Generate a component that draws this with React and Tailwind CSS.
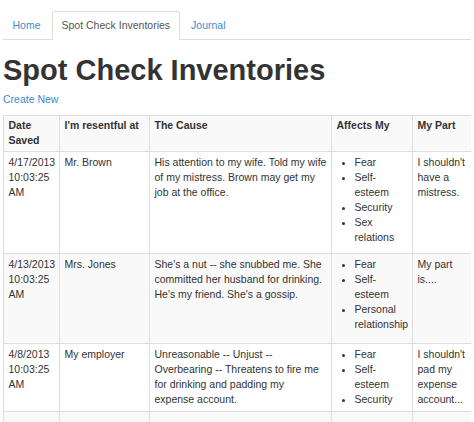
import React from "react";

const tabs = [
  { label: "Home", active: false },
  { label: "Spot Check Inventories", active: true },
  { label: "Journal", active: false },
];

const rows = [
  {
    date: ["4/17/2013", "10:03:25 AM"],
    who: "Mr. Brown",
    cause: "His attention to my wife. Told my wife of my mistress. Brown may get my job at the office.",
    affects: ["Fear", "Self-esteem", "Security", "Sex relations"],
    part: "I shouldn't have a mistress.",
    height: "h-[102px]",
    bg: "bg-white",
  },
  {
    date: ["4/13/2013", "10:03:25 AM"],
    who: "Mrs. Jones",
    cause: "She's a nut -- she snubbed me. She committed her husband for drinking. He's my friend. She's a gossip.",
    affects: ["Fear", "Self-esteem", "Personal relationship"],
    part: "My part is....",
    height: "h-[90px]",
    bg: "bg-[#f9f9f9]",
  },
  {
    date: ["4/8/2013", "10:03:25 AM"],
    who: "My employer",
    cause: "Unreasonable -- Unjust -- Overbearing -- Threatens to fire me for drinking and padding my expense account.",
    affects: ["Fear", "Self-esteem", "Security"],
    part: "I shouldn't pad my expense account...",
    height: "h-[68px]",
    bg: "bg-white",
  },
];

const th = "border border-[#dddddd] px-[4.5px] py-[2.5px] align-top text-left";
const td = "border border-[#dddddd] px-[4.5px] pt-[3.5px] pb-[2.5px] align-top text-left";

export default function App() {
  return (
    <div className="min-h-[422px] bg-white px-[3px] pt-[11px] text-[10.5px] leading-[15px] text-[#333333] font-['Liberation_Sans',Arial,sans-serif]">
      {/* Tabs */}
      <ul className="flex border-b border-[#dddddd]">
        {tabs.map((t) => (
          <li key={t.label} className="-mb-px mr-[2px]">
            <a
              href="#"
              className={
                t.active
                  ? "block rounded-t-[3px] border border-[#dddddd] border-b-transparent bg-white px-[8.5px] py-[6px] text-[#555555]"
                  : "block rounded-t-[3px] border border-transparent px-[8.5px] py-[6px] text-[#428bca]"
              }
            >
              {t.label}
            </a>
          </li>
        ))}
      </ul>

      {/* Heading */}
      <h1 className="mt-[14.5px] mb-[7.5px] text-[29px] font-bold leading-[30px]">
        Spot Check Inventories
      </h1>

      <p className="mb-[7.5px]">
        <a href="#" className="text-[#428bca]">
          Create New
        </a>
      </p>

      {/* Table */}
      <div className="overflow-hidden">
        <table className="w-[529px] table-fixed border-collapse">
          <colgroup>
            <col className="w-[56px]" />
            <col className="w-[90px]" />
            <col className="w-[182px]" />
            <col className="w-[81px]" />
            <col className="w-[60px]" />
            <col className="w-[60px]" />
          </colgroup>
          <tbody>
            <tr className="bg-[#f9f9f9]">
              <th className={th}>Date Saved</th>
              <th className={th}>I'm resentful at</th>
              <th className={th}>The Cause</th>
              <th className={th}>Affects My</th>
              <th className={th}>My Part</th>
              <th className={th}></th>
            </tr>
            {rows.map((r) => (
              <tr key={r.who} className={`${r.height} ${r.bg}`}>
                <td className={td}>
                  {r.date[0]}
                  <br />
                  {r.date[1]}
                </td>
                <td className={td}>{r.who}</td>
                <td className={td}>{r.cause}</td>
                <td className={td}>
                  <ul className="list-disc pl-[18px]">
                    {r.affects.map((a) => (
                      <li key={a}>{a}</li>
                    ))}
                  </ul>
                </td>
                <td className={td}>{r.part}</td>
                <td className={td}></td>
              </tr>
            ))}
            <tr className="h-[40px] bg-[#f9f9f9]">
              <td className={td}></td>
              <td className={td}></td>
              <td className={td}></td>
              <td className={td}></td>
              <td className={td}></td>
              <td className={td}></td>
            </tr>
          </tbody>
        </table>
      </div>
    </div>
  );
}
